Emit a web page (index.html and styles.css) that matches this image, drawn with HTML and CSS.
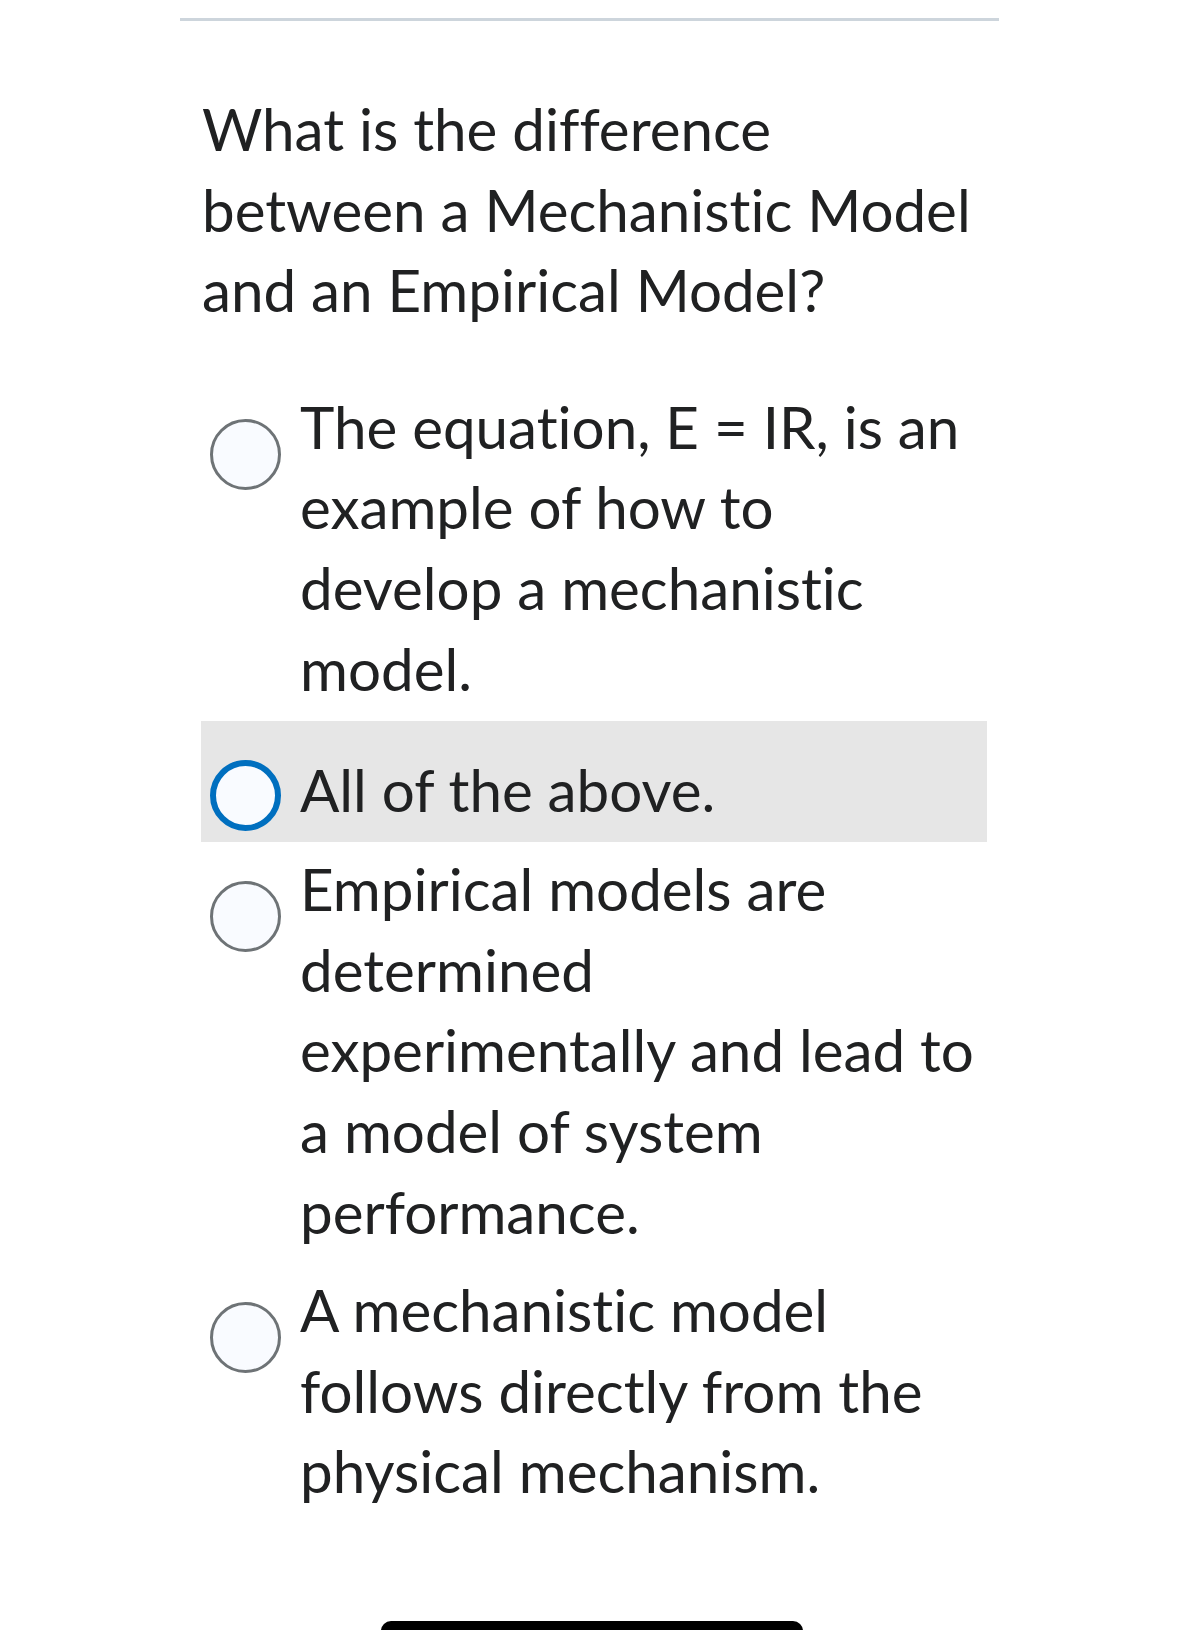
FILE: index.html
```html
<!DOCTYPE html>
<html lang="en">
<head>
<meta charset="utf-8">
<title>Question</title>
<link rel="stylesheet" href="styles.css">
</head>
<body>
<div class="page">
  <div class="rule"></div>
  <div class="question">What is the difference between a Mechanistic Model and an Empirical Model?</div>
  <div class="options">
    <label class="option">
      <span class="radio"></span>
      <span class="text">The equation, E = IR, is an example of how to develop a mechanistic model.</span>
    </label>
    <label class="option option-selected">
      <span class="radio radio-focus"></span>
      <span class="text">All of the above.</span>
    </label>
    <label class="option">
      <span class="radio"></span>
      <span class="text">Empirical models are determined experimentally and lead to a model of system performance.</span>
    </label>
    <label class="option">
      <span class="radio"></span>
      <span class="text">A mechanistic model follows directly from the physical mechanism.</span>
    </label>
  </div>
  <div class="home-indicator"></div>
</div>
</body>
</html>
```

FILE: styles.css
```css
html, body {
  margin: 0;
  padding: 0;
  background: #ffffff;
}
body {
  font-family: Lato, "Noto Sans", sans-serif;
  color: #202122;
  overflow: hidden;
  height: 1630px;
  font-variant-ligatures: none;
  font-feature-settings: "liga" 0, "clig" 0;
}
.page {
  position: relative;
  width: 1179px;
  height: 1630px;
  padding-top: 18px;
  box-sizing: border-box;
}
.rule {
  margin-left: 180px;
  width: 819px;
  height: 3px;
  background: #cdd5dc;
}
.question {
  margin: 67px 0 0 202px;
  width: 790px;
  font-size: 58.3px;
  line-height: 80.6px;
}
.options {
  margin: 47px 0 0 201px;
  width: 786px;
  display: flex;
  flex-direction: column;
}
.option {
  display: flex;
  align-items: flex-start;
  padding: 9px 10px 9px 9px;
  font-size: 58.3px;
  line-height: 80.6px;
}
.option-selected {
  background: #e6e6e6;
  margin-top: 4px;
  padding-top: 28px;
  padding-bottom: 11px;
}
.option-selected + .option {
  padding-top: 6px;
}
.radio {
  flex: 0 0 auto;
  width: 71px;
  height: 71px;
  box-sizing: border-box;
  border-radius: 50%;
  border: 3px solid #6e7376;
  background: #f9fbff;
  margin-top: 33px;
  margin-right: 19px;
}
.radio-focus {
  border: 6px solid #006fbf;
  margin-top: 11px;
}
.text {
  flex: 1 1 auto;
}
.home-indicator {
  position: absolute;
  left: 381px;
  top: 1621px;
  width: 422px;
  height: 20px;
  border-radius: 10px;
  background: #000000;
}
```
